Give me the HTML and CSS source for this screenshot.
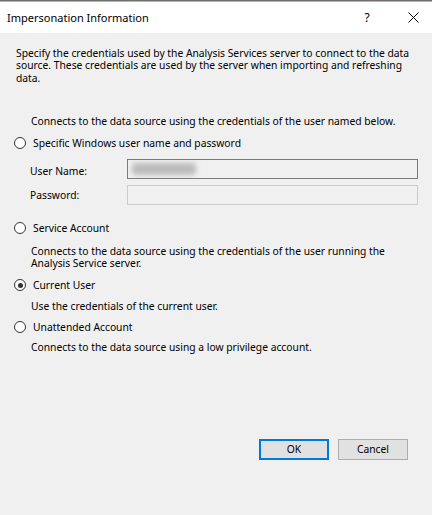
FILE: index.html
```html
<!DOCTYPE html>
<html lang="en">
<head>
<meta charset="utf-8">
<title>Impersonation Information</title>
<link rel="stylesheet" href="styles.css">
</head>
<body>
<div class="dialog">
  <div class="titlebar">
    <div class="title">Impersonation Information</div>
    <div class="tb-btn help">?</div>
    <div class="tb-btn close">
      <svg width="11" height="11" viewBox="0 0 11 11"><path d="M0.5 0.5 L10.5 10.5 M10.5 0.5 L0.5 10.5" stroke="#000" stroke-width="1" fill="none"/></svg>
    </div>
  </div>
  <div class="content">
    <p class="intro">Specify the credentials used by the Analysis Services server to connect to the data<br>source. These credentials are used by the server when importing and refreshing<br>data.</p>
    <div class="note note-top">Connects to the data source using the credentials of the user named below.</div>

    <div class="radio-row r-specific"><span class="radio"></span><span>Specific Windows user name and password</span></div>
    <div class="field f-user"><span class="flabel">User Name:</span><div class="textbox dark"><span class="blur"></span></div></div>
    <div class="field f-pass"><span class="flabel">Password:</span><div class="textbox light"></div></div>

    <div class="radio-row r-service"><span class="radio"></span><span>Service Account</span></div>
    <div class="desc d-service">Connects to the data source using the credentials of the user running the<br>Analysis Service server.</div>

    <div class="radio-row r-current"><span class="radio checked"></span><span>Current User</span></div>
    <div class="desc d-current">Use the credentials of the current user.</div>

    <div class="radio-row r-unattended"><span class="radio"></span><span>Unattended Account</span></div>
    <div class="desc d-unattended">Connects to the data source using a low privilege account.</div>

    <div class="buttons">
      <div class="btn default">OK</div>
      <div class="btn">Cancel</div>
    </div>
  </div>
</div>
</body>
</html>
```
FILE: styles.css
```css
html, body {
  margin: 0;
  padding: 0;
}
body {
  width: 432px;
  height: 515px;
  overflow: hidden;
  background: #f0f0f0;
  font-family: "Noto Sans", "Open Sans", sans-serif;
  font-size: 10.3px;
  color: #000;
}
.dialog {
  height: 515px;
  border-top: 1px solid #6f6f6f;
}
.titlebar {
  height: 31px;
  background: #fff;
  display: flex;
  align-items: center;
  overflow: hidden;
  border-top: 1px solid #b4b4b4;
}
.title {
  flex: 1;
  padding-left: 7px;
  font-size: 11px;
  white-space: nowrap;
}
.tb-btn {
  flex-shrink: 0;
  width: 46px;
  height: 31px;
  display: flex;
  align-items: center;
  justify-content: center;
}
.help {
  font-size: 12px;
}
.close {
  margin-right: -4px;
}
.content {
  display: flex;
  flex-direction: column;
  white-space: nowrap;
}
.intro {
  margin: 14px 0 0 0;
  padding-left: 16px;
  line-height: 12.4px;
}
.note, .desc {
  padding-left: 31px;
  line-height: 12.4px;
}
.note-top { margin-top: 31px; }
.radio-row {
  display: flex;
  align-items: center;
  height: 13px;
  padding-left: 14px;
  gap: 7px;
}
.radio {
  width: 10px;
  height: 10px;
  border: 1px solid #333;
  border-radius: 50%;
  background: #fff;
  position: relative;
  flex-shrink: 0;
}
.radio.checked::after {
  content: "";
  position: absolute;
  left: 2.5px;
  top: 2.5px;
  width: 5px;
  height: 5px;
  border-radius: 50%;
  background: #333;
}
.r-specific { margin-top: 8.6px; }
.field {
  display: flex;
  align-items: center;
  height: 20px;
  padding-left: 30px;
}
.flabel {
  width: 97px;
  line-height: 13px;
}
.f-user { margin-top: 10px; }
.f-user .flabel { padding-top: 5px; }
.f-pass { margin-top: 6px; }
.textbox {
  box-sizing: border-box;
  width: 291px;
  height: 20px;
  background: #f0f0f0;
  position: relative;
  overflow: hidden;
}
.textbox.dark { border: 1px solid #7a7a7a; }
.textbox.light { border: 1px solid #cccccc; }
.blur {
  position: absolute;
  left: 4px;
  top: 3px;
  width: 64px;
  height: 12px;
  background: #bcbcbc;
  filter: blur(2.5px);
  border-radius: 4px;
}
.r-service { margin-top: 16.5px; }
.d-service { margin-top: 10px; }
.r-current { margin-top: 9.2px; }
.d-current { margin-top: 8.7px; }
.r-unattended { margin-top: 7.6px; }
.d-unattended { margin-top: 8px; }
.buttons {
  display: flex;
  justify-content: flex-end;
  gap: 9px;
  padding-right: 24px;
  margin-top: 85px;
}
.btn {
  box-sizing: border-box;
  width: 70px;
  height: 21px;
  background: #e1e1e1;
  border: 1px solid #adadad;
  display: flex;
  align-items: center;
  justify-content: center;
}
.btn.default {
  border: 2px solid #0078d7;
}
```
